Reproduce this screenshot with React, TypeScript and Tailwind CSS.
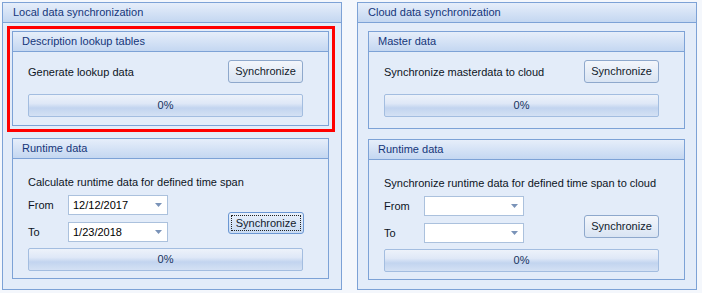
import React from "react";

const font = { fontFamily: '"Liberation Sans", Arial, sans-serif' };

function Header({ title, outer }: { title: string; outer?: boolean }) {
  return (
    <div
      className={`h-[20px] border-b border-[#7da2d6] bg-gradient-to-b from-[#e6eefa] to-[#c4d7f1] flex items-center text-[11px] text-[#15367a] ${outer ? "pl-[10px]" : "pl-[9px]"}`}
    >
      {title}
    </div>
  );
}

function Button({ focused }: { focused?: boolean }) {
  if (focused) {
    return (
      <div className="w-[76px] h-[22px] rounded-[3px] border border-[#6b97d3] bg-gradient-to-b from-[#e8f0fb] to-[#c9dbf3] p-[2px]">
        <div className="w-full h-full border border-dotted border-[#222] flex items-center justify-center text-[11px] text-[#111a2c]">
          Synchronize
        </div>
      </div>
    );
  }
  return (
    <div className="w-[75px] h-[23px] rounded-[3px] border border-[#8ea8cc] bg-gradient-to-b from-[#f3f6fb] to-[#d9e4f3] flex items-center justify-center text-[11px] text-[#111a2c]">
      Synchronize
    </div>
  );
}

function Progress() {
  return (
    <div className="w-[275px] h-[23px] rounded-[2px] border border-[#a3bde0] bg-[linear-gradient(to_bottom,#edf2fa_0%,#dfe8f7_40%,#c2d4ef_62%,#d4e1f4_100%)] flex items-center justify-center text-[11px] text-[#15315e]">
      0%
    </div>
  );
}

function DateInput({ value }: { value: string }) {
  return (
    <div className="w-[100px] h-[20px] bg-white border border-[#abc1dd] flex items-center justify-between pl-[4px] pr-[5px] text-[11px] text-[#000]">
      <span>{value}</span>
      <svg width="7" height="4" viewBox="0 0 7 4">
        <path d="M0 0 H7 L3.5 4 Z" fill="#7a93b8" />
      </svg>
    </div>
  );
}

function SimpleGroup({ title, text, tall }: { title: string; text: string; tall?: boolean }) {
  return (
    <div className={`w-[317px] ${tall ? "h-[98px]" : "h-[95px]"} border border-[#7da2d6] bg-[#e3ecf9] flex flex-col`}>
      <Header title={title} />
      <div className="pl-[15px] pt-[8px] flex flex-col">
        <div className="flex items-center h-[23px]">
          <div className="w-[200px] text-[11px] text-[#0d1424] pt-[1px]">{text}</div>
          <Button />
        </div>
        <div className="mt-[11px]">
          <Progress />
        </div>
      </div>
    </div>
  );
}

function RuntimeGroup({ text, from, to, focused }: { text: string; from: string; to: string; focused?: boolean }) {
  return (
    <div className="w-[317px] h-[141px] border border-[#7da2d6] bg-[#e3ecf9] flex flex-col">
      <Header title="Runtime data" />
      <div className="pl-[15px] flex flex-col">
        <div className="mt-[16px] h-[14px] leading-[14px] text-[11px] text-[#0d1424]">{text}</div>
        <div className="mt-[6px] flex">
          <div className="flex flex-col gap-[7px]">
            <div className="flex items-center">
              <div className="w-[40px] text-[11px] text-[#0d1424]">From</div>
              <DateInput value={from} />
            </div>
            <div className="flex items-center">
              <div className="w-[40px] text-[11px] text-[#0d1424]">To</div>
              <DateInput value={to} />
            </div>
          </div>
          <div className={`ml-[60px] ${focused ? "mt-[17px]" : "mt-[19px]"}`}>
            <Button focused={focused} />
          </div>
        </div>
        <div className="mt-[6px]">
          <Progress />
        </div>
      </div>
    </div>
  );
}

export default function App() {
  return (
    <div className="w-[702px] h-[293px] bg-[#f4f7fc] pl-[2px] pt-[2px] flex gap-[15px]" style={font}>
      <div className="w-[340px] h-[288px] border border-[#7da2d6] bg-[#e3ecf9] flex flex-col">
        <Header title="Local data synchronization" outer />
        <div className="pl-[4px] pt-[3px] flex flex-col">
          <div className="w-[328px] h-[106px] border-[3px] border-[#ff0000] pl-[2px] pt-[2px]">
            <SimpleGroup title="Description lookup tables" text="Generate lookup data" />
          </div>
          <div className="mt-[6px] ml-[5px]">
            <RuntimeGroup text="Calculate runtime data for defined time span" from="12/12/2017" to="1/23/2018" focused />
          </div>
        </div>
      </div>
      <div className="w-[340px] h-[288px] border border-[#7da2d6] bg-[#e3ecf9] flex flex-col">
        <Header title="Cloud data synchronization" outer />
        <div className="pl-[10px] pt-[8px] flex flex-col">
          <SimpleGroup title="Master data" text="Synchronize masterdata to cloud" tall />
          <div className="mt-[10px]">
            <RuntimeGroup text="Synchronize runtime data for defined time span to cloud" from="" to="" />
          </div>
        </div>
      </div>
    </div>
  );
}
